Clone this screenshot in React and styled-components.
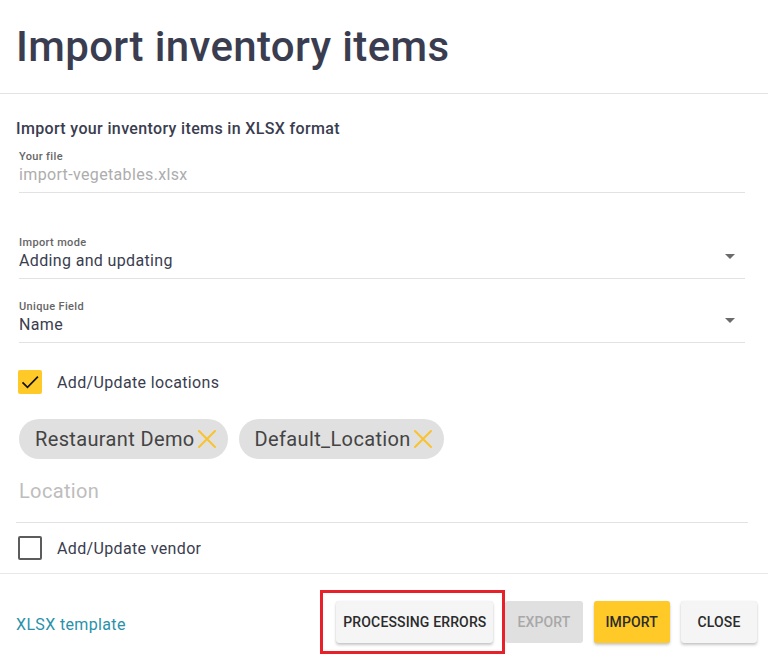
import * as React from 'react'
import styled, { createGlobalStyle } from 'styled-components'

const GlobalStyle = createGlobalStyle`
  html, body {
    margin: 0;
    padding: 0;
    background: #fff;
    font-family: Roboto, "Liberation Sans", sans-serif;
    letter-spacing: 0.022em;
  }
`

const Dialog = styled.div`
  width: 768px;
  height: 661px;
  display: flex;
  flex-direction: column;
  background: #fff;
  overflow: hidden;
`

const Header = styled.div`
  height: 94px;
  padding: 0 16px;
  display: flex;
  align-items: center;
  border-bottom: 1px solid #e4e4e4;
  box-sizing: border-box;
`

const Title = styled.h1`
  margin: 0;
  font-size: 42px;
  font-weight: 500;
  color: #3a3d4f;
`

const Body = styled.div`
  padding: 25px 20px 13px 16px;
  display: flex;
  flex-direction: column;
  border-bottom: 1px solid #e8e8e8;
`

const Subtitle = styled.div`
  font-size: 16px;
  line-height: 19px;
  font-weight: 500;
  color: #3a3d4f;
`

const Field = styled.div`
  margin: ${p => p.top}px 3px 0 3px;
  padding-bottom: 8px;
  border-bottom: 1px solid #e2e2e2;
  display: flex;
  align-items: flex-end;
`

const FieldInner = styled.div`
  flex: 1;
  display: flex;
  flex-direction: column;
  gap: 2px;
`

const Label = styled.div`
  font-size: 11px;
  line-height: 13px;
  font-weight: 500;
  color: #666;
`

const Value = styled.div`
  font-size: 16px;
  line-height: 19px;
  color: ${p => (p.muted ? '#adadad' : '#3a3d4f')};
`

const Caret = styled.span`
  width: 0;
  height: 0;
  margin: 0 10px 11px 0;
  border-left: 5.5px solid transparent;
  border-right: 5.5px solid transparent;
  border-top: 5px solid #6b6b6b;
`

const CheckRow = styled.label`
  margin: ${p => p.top}px 0 0 2px;
  display: flex;
  align-items: center;
  gap: 15px;
  font-size: 16px;
  color: #3a3d4f;
`

const Box = styled.span`
  width: 24px;
  height: 24px;
  box-sizing: border-box;
  border-radius: 2px;
  display: flex;
  align-items: center;
  justify-content: center;
  background: ${p => (p.checked ? '#ffca28' : '#fff')};
  border: ${p => (p.checked ? 'none' : '2px solid #5c5c5c')};
`

const Chips = styled.div`
  margin: 25px 0 0 3px;
  display: flex;
  gap: 11px;
`

const Chip = styled.div`
  height: 40px;
  border-radius: 20px;
  background: #e0e0e0;
  display: flex;
  align-items: center;
  gap: 2px;
  padding: 0 11px 0 16px;
  font-size: 20px;
  letter-spacing: 0.018em;
  color: #444;
`

const LocationField = styled.div`
  margin-top: 20px;
  padding: 0 3px 19px;
  border-bottom: 1px solid #e2e2e2;
  font-size: 20px;
  line-height: 24px;
  color: #bdbdbd;
`

const Footer = styled.div`
  display: flex;
  align-items: center;
  justify-content: space-between;
  padding: 15px 11px 0 16px;
`

const Link = styled.a`
  color: #2a91aa;
  font-size: 16px;
  text-decoration: none;
  margin-top: 5px;
`

const Actions = styled.div`
  display: flex;
  align-items: center;
  gap: 11px;
`

const Highlight = styled.div`
  border: 3px solid #e8202a;
  padding: 8px 9px 8px 13px;
  margin: 1px -11px 0 0;
`

const Button = styled.button`
  height: 42px;
  min-width: 76px;
  padding: 0 ${p => p.pad || 12}px;
  border: none;
  border-radius: 3px;
  font-family: Roboto, "Liberation Sans", sans-serif;
  font-size: 14px;
  font-weight: 500;
  letter-spacing: 0.01em;
  text-transform: uppercase;
  color: ${p => (p.disabled ? '#a8a8a8' : '#2b2b2b')};
  background: ${p => (p.primary ? '#ffca28' : p.disabled ? '#e0e0e0' : '#f5f5f5')};
  box-shadow: ${p => (p.disabled ? 'none' : '0 2px 3px rgba(0,0,0,0.22), 0 0 1px rgba(0,0,0,0.12)')};
`

const Check = () => (
  <svg width="20" height="20" viewBox="0 0 24 24">
    <path d="M3 12.5l6 6L21.5 5.5" fill="none" stroke="#111" strokeWidth="2" />
  </svg>
)

const Cross = () => (
  <svg width="20" height="20" viewBox="0 0 20 20">
    <path d="M2 2l16 16M18 2L2 18" stroke="#f9c22e" strokeWidth="2" strokeLinecap="round" />
  </svg>
)

const fields = [
  { label: 'Import mode', value: 'Adding and updating', top: 43 },
  { label: 'Unique Field', value: 'Name', top: 21 },
]

const App = () => (
  <Dialog>
    <GlobalStyle />
    <Header>
      <Title>Import inventory items</Title>
    </Header>
    <Body>
      <Subtitle>Import your inventory items in XLSX format</Subtitle>
      <Field top={12}>
        <FieldInner>
          <Label>Your file</Label>
          <Value muted>import-vegetables.xlsx</Value>
        </FieldInner>
      </Field>
      {fields.map(f => (
        <Field key={f.label} top={f.top}>
          <FieldInner>
            <Label>{f.label}</Label>
            <Value>{f.value}</Value>
          </FieldInner>
          <Caret />
        </Field>
      ))}
      <CheckRow top={27}>
        <Box checked>
          <Check />
        </Box>
        Add/Update locations
      </CheckRow>
      <Chips>
        {['Restaurant Demo', 'Default_Location'].map(name => (
          <Chip key={name}>
            {name}
            <Cross />
          </Chip>
        ))}
      </Chips>
      <LocationField>Location</LocationField>
      <CheckRow top={13}>
        <Box />
        Add/Update vendor
      </CheckRow>
    </Body>
    <Footer>
      <Link href="#">XLSX template</Link>
      <Actions>
        <Highlight>
          <Button pad={7}>Processing errors</Button>
        </Highlight>
        <Button disabled>Export</Button>
        <Button primary>Import</Button>
        <Button>Close</Button>
      </Actions>
    </Footer>
  </Dialog>
)

export default App
